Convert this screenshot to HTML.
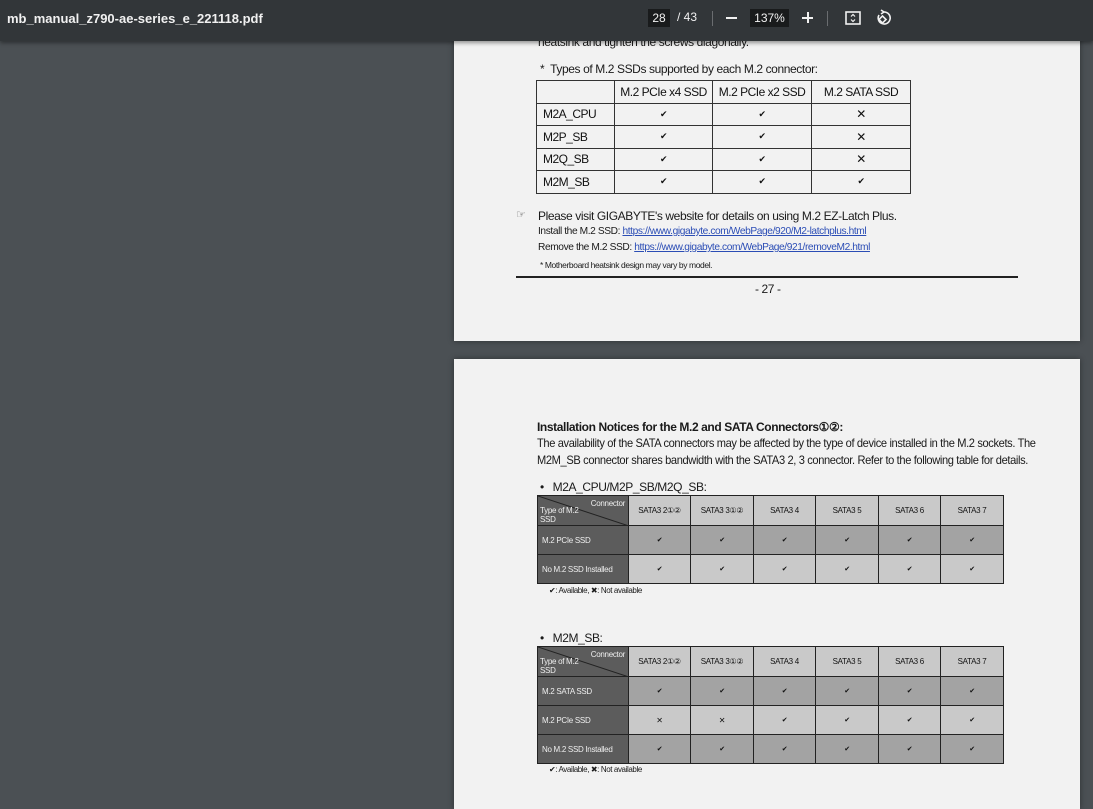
<!DOCTYPE html>
<html><head><meta charset="utf-8"><style>
*{margin:0;padding:0;box-sizing:border-box}
body{width:1093px;height:800px;overflow:hidden;background:#4b5054;font-family:"Liberation Sans",sans-serif;position:relative}
.bar{position:absolute;left:0;top:0;width:1093px;height:41px;background:#323639;color:#f1f1f1;box-shadow:0 2px 4px rgba(0,0,0,.4);z-index:5}
.abs{position:absolute}
.page{position:absolute;left:454px;width:626px;background:#f2f2f2;box-shadow:0 0 6px rgba(0,0,0,.4)}
.t{position:absolute;white-space:nowrap;color:#1a1a1a;letter-spacing:-0.4px}
table{position:absolute;border-collapse:collapse;table-layout:fixed;white-space:nowrap}
.t1{font-size:12px;letter-spacing:-0.5px}
.t1 td{border:1px solid #333;height:22.5px;padding:0 6px;color:#111;overflow:hidden}
.t1 td.c{text-align:center;padding:0}
.t1 .k{font-size:9px}
.t2 td{border:1px solid #222;font-size:8px;color:#111;text-align:center;letter-spacing:-0.3px;overflow:hidden}
.t2 td.d{background:#5c5c5c;color:#eee;text-align:left;padding-left:4px}
.t2 tr.h td{background:#c9c9c9}
.t2 tr.m td{background:#a3a3a3}
.t2 tr.l td{background:#c9c9c9}
.t2 tr td.d{background:#5c5c5c}
.t2 .k{font-size:7px}
a{color:#2b4db5;text-decoration:underline}
</style></head><body>
<div class="bar">
<div class="abs" style="left:7px;top:11px;font-size:13px;font-weight:bold;color:#f1f1f1">mb_manual_z790-ae-series_e_221118.pdf</div>
<div class="abs" style="left:648px;top:9px;width:22px;height:18px;background:#191b1c;font-size:12px;text-align:center;line-height:18px">28</div>
<div class="abs" style="left:677px;top:10px;font-size:12px">/ 43</div>
<div class="abs" style="left:712px;top:11px;width:1px;height:15px;background:#6a6d70"></div>
<div class="abs" style="left:726px;top:17px;width:11px;height:2px;background:#f1f1f1"></div>
<div class="abs" style="left:750px;top:9px;width:39px;height:18px;background:#191b1c;font-size:12px;text-align:center;line-height:18px">137%</div>
<div class="abs" style="left:802px;top:17px;width:11px;height:2px;background:#f1f1f1"></div>
<div class="abs" style="left:806.5px;top:12px;width:2px;height:11px;background:#f1f1f1"></div>
<div class="abs" style="left:827px;top:11px;width:1px;height:15px;background:#6a6d70"></div>
<svg class="abs" style="left:844px;top:9px" width="18" height="18" viewBox="0 0 18 18" fill="none" stroke="#f1f1f1" stroke-width="1.6"><rect x="2" y="3" width="14" height="12"/><path d="M7 7.5l2-2 2 2M7 10.5l2 2 2-2" stroke-width="1.2"/></svg>
<svg class="abs" style="left:875px;top:8px" width="18" height="20" viewBox="0 0 18 20" fill="none" stroke="#f1f1f1" stroke-width="1.6"><path d="M9 4a6 6 0 1 1-5 3"/><path d="M6 2l3 2-3 2"/><rect x="5" y="9" width="5" height="5" transform="rotate(45 7.5 11.5)"/></svg>
</div>

<div class="page" style="top:0;height:341px">
<div class="t" style="left:84px;top:35px;font-size:12px">heatsink and tighten the screws diagonally.</div>
<div class="t" style="left:86px;top:62px;font-size:12px">* &nbsp;Types of M.2 SSDs supported by each M.2 connector:</div>
<table class="t1" style="left:82px;top:80px;width:374px">
<colgroup><col style="width:78px"><col style="width:98px"><col style="width:99px"><col style="width:99px"></colgroup>
<tr><td></td><td class="c">M.2 PCIe x4 SSD</td><td class="c">M.2 PCIe x2 SSD</td><td class="c">M.2 SATA SSD</td></tr>
<tr><td>M2A_CPU</td><td class="c k">✔</td><td class="c k">✔</td><td class="c">✕</td></tr>
<tr><td>M2P_SB</td><td class="c k">✔</td><td class="c k">✔</td><td class="c">✕</td></tr>
<tr><td>M2Q_SB</td><td class="c k">✔</td><td class="c k">✔</td><td class="c">✕</td></tr>
<tr><td>M2M_SB</td><td class="c k">✔</td><td class="c k">✔</td><td class="c k">✔</td></tr>
</table>
<div class="t" style="left:62px;top:208px;font-size:11px;color:#555">☞</div>
<div class="t" style="left:84px;top:209px;font-size:12px">Please visit GIGABYTE's website for details on using M.2 EZ-Latch Plus.</div>
<div class="t" style="left:84px;top:226px;font-size:10.2px">Install the M.2 SSD: <a>https://www.gigabyte.com/WebPage/920/M2-latchplus.html</a></div>
<div class="t" style="left:84px;top:242px;font-size:10.2px">Remove the M.2 SSD: <a>https://www.gigabyte.com/WebPage/921/removeM2.html</a></div>
<div class="t" style="left:86px;top:260px;font-size:8.5px">* Motherboard heatsink design may vary by model.</div>
<div class="abs" style="left:62px;top:276px;width:502px;height:1.5px;background:#222"></div>
<div class="t" style="left:301px;top:282px;font-size:12px">- 27 -</div>
</div>

<div class="page" style="top:359px;height:450px">
<div class="t" style="left:83px;top:61px;font-size:12px;font-weight:bold">Installation Notices for the M.2 and SATA Connectors①②:</div>
<div class="t" style="left:83px;top:77px;font-size:12px;transform:scaleX(.925);transform-origin:left">The availability of the SATA connectors may be affected by the type of device installed in the M.2 sockets. The</div>
<div class="t" style="left:83px;top:94px;font-size:12px;transform:scaleX(.925);transform-origin:left">M2M_SB connector shares bandwidth with the SATA3 2, 3 connector. Refer to the following table for details.</div>
<div class="t" style="left:86px;top:121px;font-size:12px">• &nbsp;&nbsp;M2A_CPU/M2P_SB/M2Q_SB:</div>
<table class="t2" style="left:83px;top:136px;width:466px">
<colgroup><col style="width:91px"><col style="width:62px"><col style="width:63px"><col style="width:62px"><col style="width:63px"><col style="width:62px"><col style="width:63px"></colgroup>
<tr class="h" style="height:30px"><td class="d" style="position:relative;padding:0"><svg style="position:absolute;left:0;top:0" width="91" height="30"><line x1="0" y1="0" x2="91" y2="30" stroke="#222"/></svg><span style="position:absolute;right:3px;top:3px">Connector</span><span style="position:absolute;left:2px;top:10px;line-height:9px">Type of M.2<br>SSD</span></td><td>SATA3 2①②</td><td>SATA3 3①②</td><td>SATA3 4</td><td>SATA3 5</td><td>SATA3 6</td><td>SATA3 7</td></tr>
<tr class="m" style="height:29px"><td class="d">M.2 PCIe SSD</td><td class="k">✔</td><td class="k">✔</td><td class="k">✔</td><td class="k">✔</td><td class="k">✔</td><td class="k">✔</td></tr>
<tr class="l" style="height:29px"><td class="d">No M.2 SSD Installed</td><td class="k">✔</td><td class="k">✔</td><td class="k">✔</td><td class="k">✔</td><td class="k">✔</td><td class="k">✔</td></tr>
</table>
<div class="t" style="left:95px;top:227px;font-size:8px">✔: Available, ✖: Not available</div>
<div class="t" style="left:86px;top:272px;font-size:12px">• &nbsp;&nbsp;M2M_SB:</div>
<table class="t2" style="left:83px;top:287px;width:466px">
<colgroup><col style="width:91px"><col style="width:62px"><col style="width:63px"><col style="width:62px"><col style="width:63px"><col style="width:62px"><col style="width:63px"></colgroup>
<tr class="h" style="height:30px"><td class="d" style="position:relative;padding:0"><svg style="position:absolute;left:0;top:0" width="91" height="30"><line x1="0" y1="0" x2="91" y2="30" stroke="#222"/></svg><span style="position:absolute;right:3px;top:3px">Connector</span><span style="position:absolute;left:2px;top:10px;line-height:9px">Type of M.2<br>SSD</span></td><td>SATA3 2①②</td><td>SATA3 3①②</td><td>SATA3 4</td><td>SATA3 5</td><td>SATA3 6</td><td>SATA3 7</td></tr>
<tr class="m" style="height:29px"><td class="d">M.2 SATA SSD</td><td class="k">✔</td><td class="k">✔</td><td class="k">✔</td><td class="k">✔</td><td class="k">✔</td><td class="k">✔</td></tr>
<tr class="l" style="height:29px"><td class="d">M.2 PCIe SSD</td><td>✕</td><td>✕</td><td class="k">✔</td><td class="k">✔</td><td class="k">✔</td><td class="k">✔</td></tr>
<tr class="m" style="height:29px"><td class="d">No M.2 SSD Installed</td><td class="k">✔</td><td class="k">✔</td><td class="k">✔</td><td class="k">✔</td><td class="k">✔</td><td class="k">✔</td></tr>
</table>
<div class="t" style="left:95px;top:406px;font-size:8px">✔: Available, ✖: Not available</div>
</div>
</body></html>
